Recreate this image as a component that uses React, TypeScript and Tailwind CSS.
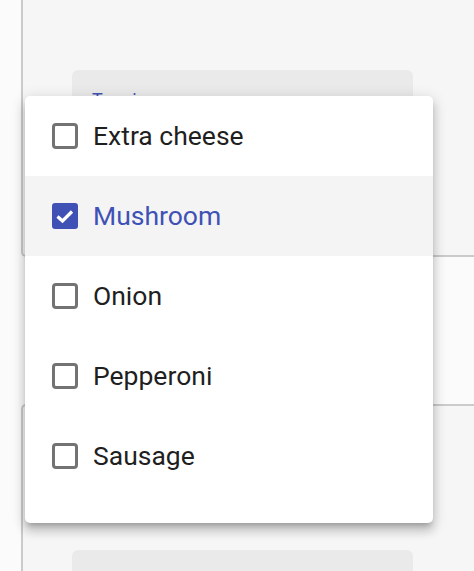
import { useState } from 'react';

const toppings = ['Extra cheese', 'Mushroom', 'Onion', 'Pepperoni', 'Sausage'];

function Box({ checked }: { checked: boolean }) {
  if (checked) {
    return (
      <div className="w-[26px] h-[26px] rounded-[3px] bg-[#3f51b5] flex items-center justify-center flex-shrink-0">
        <svg viewBox="0 0 26 26" className="w-[26px] h-[26px]" fill="none" stroke="white" strokeWidth={3.2}>
          <polyline points="5.5,13.5 10.5,18 20,8.5" />
        </svg>
      </div>
    );
  }
  return <div className="w-[26px] h-[26px] rounded-[4px] border-[3px] border-[#737373] flex-shrink-0" />;
}

export default function App() {
  const [selected, setSelected] = useState<string[]>(['Mushroom']);

  const toggle = (t: string) =>
    setSelected(s => (s.includes(t) ? s.filter(x => x !== t) : [...s, t]));

  return (
    <div className="relative w-[474px] h-[571px] overflow-hidden bg-[#fbfbfb]" style={{ fontFamily: 'Roboto, "Liberation Sans", sans-serif' }}>
      {/* Card behind, top */}
      <div className="ml-[21px] h-[257px] bg-[#f6f6f6] border-l-2 border-b-2 border-[#cbcbcb] rounded-bl-[5px] pl-[49px] pt-[70px]">
        <div className="w-[341px] h-[120px] bg-[#eaeaea] rounded-t-[6px] pl-[20px] pt-[19px]">
          <span className="text-[18px] leading-none text-[#3f51b5]">Toppings</span>
        </div>
      </div>

      {/* Card behind, bottom */}
      <div className="ml-[21px] mt-[147px] h-[200px] bg-[#f6f6f6] border-l-2 border-t-2 border-[#cbcbcb] rounded-tl-[5px] pl-[49px] pt-[144px]">
        <div className="w-[341px] h-[60px] bg-[#eaeaea] rounded-t-[6px]" />
      </div>

      {/* Menu */}
      <div className="absolute left-[25px] top-[96px] w-[408px] h-[427px] bg-white rounded-[5px] shadow-[0_5px_5px_-3px_rgba(0,0,0,0.2),0_8px_10px_1px_rgba(0,0,0,0.14),0_3px_14px_2px_rgba(0,0,0,0.12)]">
        {toppings.map(t => {
          const on = selected.includes(t);
          return (
            <div
              key={t}
              onClick={() => toggle(t)}
              className={`h-[80px] flex items-center pl-[27px] gap-[15px] cursor-pointer ${on ? 'bg-[#f4f4f4]' : ''}`}
            >
              <Box checked={on} />
              <span className={`text-[26.5px] leading-none ${on ? 'text-[#3f51b5]' : 'text-[#1f1f1f]'}`}>{t}</span>
            </div>
          );
        })}
      </div>
    </div>
  );
}
